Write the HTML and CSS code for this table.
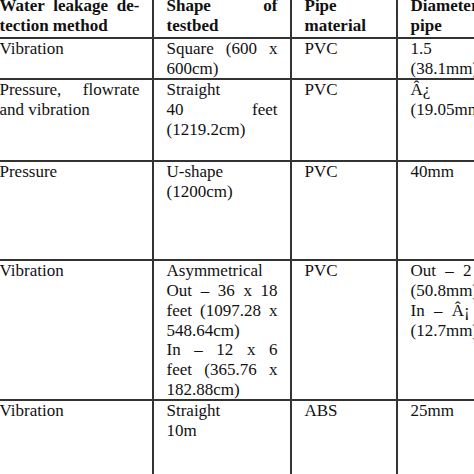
FILE: index.html
```html
<!DOCTYPE html>
<html>
<head>
<meta charset="utf-8">
<link rel="stylesheet" href="styles.css">
</head>
<body>
<table class="tbl">
<colgroup><col class="c1"><col class="c2"><col class="c3"><col class="c4"></colgroup>
<thead>
<tr class="r0">
<th><span class="l j">Water leakage de-</span><span class="l">tection method</span></th>
<th><span class="l j">Shape of</span><span class="l">testbed</span></th>
<th><span class="l">Pipe</span><span class="l">material</span></th>
<th><span class="l">Diameter of</span><span class="l">pipe</span></th>
</tr>
</thead>
<tbody>
<tr class="r1">
<td><span class="l">Vibration</span></td>
<td><span class="l j">Square (600 x</span><span class="l">600cm)</span></td>
<td><span class="l">PVC</span></td>
<td><span class="l">1.5</span><span class="l">(38.1mm)</span></td>
</tr>
<tr class="r2">
<td><span class="l j">Pressure, flowrate</span><span class="l">and vibration</span></td>
<td><span class="l">Straight</span><span class="l j">40 feet</span><span class="l">(1219.2cm)</span></td>
<td><span class="l">PVC</span></td>
<td><span class="l">Â¿</span><span class="l">(19.05mm)</span></td>
</tr>
<tr class="r3">
<td><span class="l">Pressure</span></td>
<td><span class="l">U-shape</span><span class="l">(1200cm)</span></td>
<td><span class="l">PVC</span></td>
<td><span class="l">40mm</span></td>
</tr>
<tr class="r4">
<td><span class="l">Vibration</span></td>
<td><span class="l">Asymmetrical</span><span class="l j">Out – 36 x 18</span><span class="l j">feet (1097.28 x</span><span class="l">548.64cm)</span><span class="l j">In – 12 x 6</span><span class="l j">feet (365.76 x</span><span class="l">182.88cm)</span></td>
<td><span class="l">PVC</span></td>
<td><span class="l wide">Out – 2</span><span class="l">(50.8mm)</span><span class="l wide">In – Â¡</span><span class="l">(12.7mm)</span></td>
</tr>
<tr class="r5">
<td><span class="l">Vibration</span></td>
<td><span class="l">Straight</span><span class="l">10m</span></td>
<td><span class="l">ABS</span></td>
<td><span class="l">25mm</span></td>
</tr>
</tbody>
</table>
</body>
</html>
```

FILE: styles.css
```css
html, body {
  margin: 0;
  padding: 0;
  background: #fff;
}
body {
  width: 474px;
  height: 474px;
  overflow: hidden;
  font-family: "Liberation Serif", "Times New Roman", serif;
  font-size: 17px;
  line-height: 19.7px;
  color: #111;
}
.tbl {
  border-collapse: collapse;
  table-layout: fixed;
  width: 571px;
  margin: -6px 0 0 -15px;
}
.c1 { width: 167px; }
.c2 { width: 138px; }
.c3 { width: 106px; }
.c4 { width: 160px; }
.tbl th, .tbl td {
  border: 2px solid #333;
  padding: 0 12.5px;
  vertical-align: top;
  text-align: left;
  white-space: nowrap;
}
.tbl th { font-weight: bold; }
.l { display: block; }
.j { text-align: justify; text-align-last: justify; }
.wide { word-spacing: 5px; }
.r0 { height: 43px; }
.r1 { height: 40px; }
.r2 { height: 82px; }
.r3 { height: 99px; }
.r4 { height: 138px; }
.r5 { height: 110px; }
```
